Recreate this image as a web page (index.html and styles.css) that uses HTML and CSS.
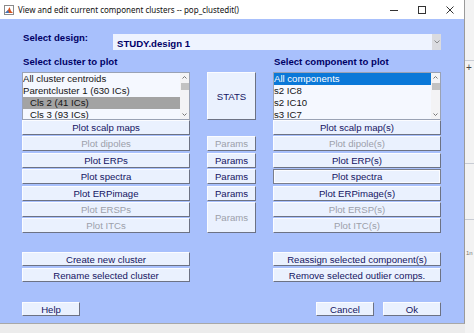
FILE: index.html
```html
<!DOCTYPE html>
<html>
<head>
<meta charset="utf-8">
<link rel="stylesheet" href="styles.css">
</head>
<body>
<div class="desk">
  <div class="window">
    <div class="titlebar">
      <svg class="appicon" width="10" height="10" viewBox="0 0 10 10">
        <rect x="0.5" y="0.5" width="9" height="9" fill="#fff" stroke="#8a8a8a"/>
        <polygon points="1,8 4,5 5.5,2 7,6 9,8" fill="#d9541e"/>
        <polygon points="1,8 4,5 5,8" fill="#3a78c2"/>
      </svg>
      <span class="title">View and edit current component clusters -- pop_clustedit()</span>
      <div class="winctl">
        <svg width="8" height="8" viewBox="0 0 8 8"><line x1="0" y1="4.5" x2="8" y2="4.5" stroke="#333" stroke-width="1"/></svg>
        <svg width="8" height="8" viewBox="0 0 8 8"><rect x="0.5" y="0.5" width="7" height="7" fill="none" stroke="#333" stroke-width="1"/></svg>
        <svg width="8" height="8" viewBox="0 0 8 8"><path d="M0.5 0.5 L7.5 7.5 M7.5 0.5 L0.5 7.5" stroke="#333" stroke-width="1"/></svg>
      </div>
    </div>
    <div class="panel">
      <div class="design-row">
        <span class="lbl design-lbl">Select design:</span>
        <div class="combo">
          <span class="combo-text">STUDY.design 1</span>
          <span class="combo-arrow"><svg width="6" height="4" viewBox="0 0 6 4"><path d="M0.5 0.5 L3 3 L5.5 0.5" fill="none" stroke="#8a8a8a" stroke-width="1"/></svg></span>
        </div>
      </div>

      <div class="grid top">
        <div class="lbl">Select cluster to plot</div>
        <div></div>
        <div class="lbl">Select component to plot</div>

        <div class="list">
          <div class="items">
            <div class="item">All cluster centroids</div>
            <div class="item">Parentcluster 1 (630 ICs)</div>
            <div class="item indent selgray">Cls 2 (41 ICs)</div>
            <div class="item indent">Cls 3 (93 ICs)</div>
          </div>
          <div class="scroll">
            <span class="sarrow"><svg width="5" height="3" viewBox="0 0 5 3"><path d="M0.5 2.5 L2.5 0.5 L4.5 2.5" fill="none" stroke="#777" stroke-width="1"/></svg></span>
            <span class="thumb"></span>
            <span class="sfill"></span>
            <span class="sarrow"><svg width="5" height="3" viewBox="0 0 5 3"><path d="M0.5 0.5 L2.5 2.5 L4.5 0.5" fill="none" stroke="#777" stroke-width="1"/></svg></span>
          </div>
        </div>
        <button class="btn stats">STATS</button>
        <div class="list">
          <div class="items">
            <div class="item selblue">All components</div>
            <div class="item">s2 IC8</div>
            <div class="item">s2 IC10</div>
            <div class="item">s3 IC7</div>
          </div>
          <div class="scroll">
            <span class="sarrow"><svg width="5" height="3" viewBox="0 0 5 3"><path d="M0.5 2.5 L2.5 0.5 L4.5 2.5" fill="none" stroke="#777" stroke-width="1"/></svg></span>
            <span class="thumb"></span>
            <span class="sfill"></span>
            <span class="sarrow"><svg width="5" height="3" viewBox="0 0 5 3"><path d="M0.5 0.5 L2.5 2.5 L4.5 0.5" fill="none" stroke="#777" stroke-width="1"/></svg></span>
          </div>
        </div>
      </div>

      <div class="grid plots">
        <button class="btn">Plot scalp maps</button>
        <div></div>
        <button class="btn">Plot scalp map(s)</button>

        <button class="btn off">Plot dipoles</button>
        <button class="btn off">Params</button>
        <button class="btn off">Plot dipole(s)</button>

        <button class="btn">Plot ERPs</button>
        <button class="btn">Params</button>
        <button class="btn">Plot ERP(s)</button>

        <button class="btn">Plot spectra</button>
        <button class="btn">Params</button>
        <button class="btn focus">Plot spectra</button>

        <button class="btn">Plot ERPimage</button>
        <button class="btn">Params</button>
        <button class="btn">Plot ERPimage(s)</button>

        <button class="btn off">Plot ERSPs</button>
        <button class="btn off span2">Params</button>
        <button class="btn off">Plot ERSP(s)</button>

        <button class="btn off">Plot ITCs</button>
        <button class="btn off">Plot ITC(s)</button>
      </div>

      <div class="grid edits">
        <button class="btn">Create new cluster</button>
        <div></div>
        <button class="btn">Reassign selected component(s)</button>
        <button class="btn">Rename selected cluster</button>
        <div></div>
        <button class="btn">Remove selected outlier comps.</button>
      </div>

      <div class="footer">
        <button class="btn small">Help</button>
        <div class="footer-right">
          <button class="btn small">Cancel</button>
          <button class="btn small">Ok</button>
        </div>
      </div>
    </div>
  </div>
  <div class="side">
    <div class="side-seg s1"></div>
    <div class="side-plus">+</div>
    <div class="side-seg s2"></div>
    <div class="side-seg s3"></div>
    <div class="side-text">1n</div>
  </div>
</div>
</body>
</html>
```

FILE: styles.css
```css
html, body {
  margin: 0;
  padding: 0;
}
body {
  background: #ececec;
  width: 474px;
  height: 333px;
  overflow: hidden;
  font-family: "Liberation Sans", Arial, sans-serif;
}
.desk {
  display: flex;
  align-items: flex-start;
  height: 333px;
}
.window {
  width: 464px;
  height: 323px;
  display: flex;
  flex-direction: column;
  border-right: 1px solid #9a9a9a;
  border-bottom: 1px solid #a8a8a8;
  flex: none;
}
.side {
  flex: 1;
  height: 333px;
  background: #f3f3f3;
  display: flex;
  flex-direction: column;
  font-family: "Liberation Sans", Arial, sans-serif;
}
.side-seg {
  border-bottom: 1px solid #c8ccd4;
  flex: none;
}
.s1 { height: 60px; }
.side-plus {
  height: 14px;
  line-height: 14px;
  font-size: 10px;
  color: #444;
  padding-left: 1px;
}
.s2 { height: 88px; }
.s3 { height: 55px; }
.side-text {
  margin-top: 30px;
  font-size: 6px;
  color: #777;
  padding-left: 1px;
}
.titlebar {
  height: 19px;
  background: #ffffff;
  display: flex;
  align-items: center;
  flex: none;
}
.appicon {
  margin-left: 4px;
  margin-right: 4px;
  flex: none;
}
.title {
  font-family: "Noto Sans", "Liberation Sans", sans-serif;
  font-size: 8px;
  color: #111;
  white-space: nowrap;
}
.winctl {
  margin-left: auto;
  display: flex;
  align-items: center;
  gap: 20px;
  margin-right: 10px;
}
.panel {
  flex: 1;
  background: #a8c0fc;
  padding: 15px 23px 0 22px;
  display: flex;
  flex-direction: column;
}
.lbl {
  font-size: 9.6px;
  font-weight: bold;
  color: #000066;
  line-height: 11px;
  white-space: nowrap;
  padding-left: 1px;
}
.design-row {
  display: flex;
  height: 16px;
}
.design-lbl {
  width: 90px;
  margin-top: -2.5px;
}
.combo {
  flex: 1;
  display: flex;
  align-items: center;
  background: #eef3ff;
  height: 16px;
}
.combo-text {
  flex: 1;
  font-size: 9.6px;
  font-weight: bold;
  color: #000066;
  padding-left: 4px;
  padding-top: 2px;
}
.combo-arrow {
  width: 9px;
  height: 16px;
  background: #dadbe0;
  display: flex;
  align-items: center;
  justify-content: center;
}
.grid {
  display: grid;
  grid-template-columns: 168px 49px 168px;
  column-gap: 17px;
}
.top {
  margin-top: 5.5px;
  grid-template-rows: 11px 48px;
  row-gap: 5.5px;
}
.list {
  box-sizing: border-box;
  height: 48px;
  border: 1px solid #9aa2b4;
  background: #f5f8ff;
  display: flex;
  overflow: hidden;
}
.items {
  flex: 1;
  min-width: 0;
}
.item {
  height: 12px;
  line-height: 12px;
  font-size: 9.6px;
  color: #141414;
  white-space: nowrap;
  padding-left: 0;
}
.item.indent {
  padding-left: 7px;
}
.selgray {
  background: #a3a3a3;
}
.selblue {
  background: #0a78d8;
  color: #ffffff;
}
.scroll {
  width: 9px;
  display: flex;
  flex-direction: column;
  align-items: center;
  background: #f3f3f5;
}
.sarrow {
  height: 9px;
  display: flex;
  align-items: center;
  justify-content: center;
}
.thumb {
  width: 8px;
  height: 7px;
  background: #c2c2c2;
  margin-top: 1px;
}
.sfill {
  flex: 1;
}
.btn {
  box-sizing: border-box;
  margin: 0;
  padding: 0;
  height: 15px;
  background: #eaf1fe;
  border: 1px solid;
  border-color: #fbfcff #6c7284 #6c7284 #fbfcff;
  border-radius: 0;
  font-family: "Liberation Sans", Arial, sans-serif;
  font-size: 9.6px;
  line-height: 13px;
  color: #141462;
  text-align: center;
  white-space: nowrap;
  overflow: hidden;
}
.btn.off {
  color: #9ca0aa;
}
.btn.focus {
  border-color: #7a7e8c;
  box-shadow: inset 0 0 0 1px #fbfcff;
}
.stats {
  height: 48px;
}
.plots {
  grid-template-rows: repeat(7, 15px);
  row-gap: 1.4px;
}
.plots .btn {
  height: 15px;
}
.span2 {
  grid-row: span 2;
  height: auto !important;
}
.edits {
  margin-top: 18.6px;
  grid-template-rows: 14.5px 14.5px;
  row-gap: 1.5px;
}
.edits .btn {
  height: 14.5px;
}
.footer {
  margin-top: 20px;
  display: flex;
  justify-content: space-between;
}
.footer-right {
  display: flex;
  gap: 9px;
}
.btn.small {
  width: 58px;
  height: 14px;
}
```
